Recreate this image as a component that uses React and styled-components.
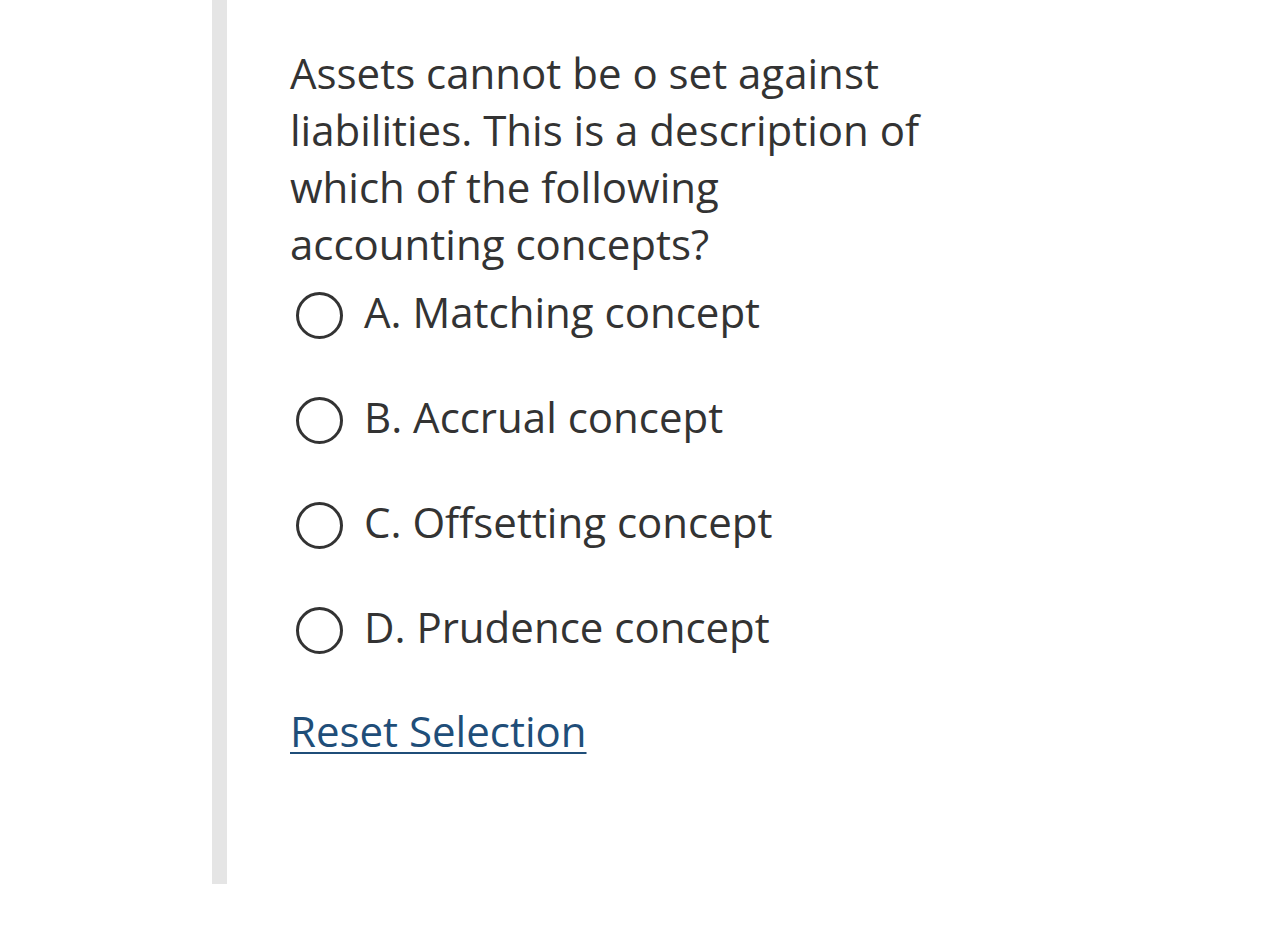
import React from "react";
import styled, { createGlobalStyle } from "styled-components";

const GlobalStyle = createGlobalStyle`
    body {
        margin: 0;
        background: #ffffff;
        font-family: "Open Sans", "Liberation Sans", sans-serif;
    }
`;

const options = [
    "A. Matching concept",
    "B. Accrual concept",
    "C. Offsetting concept",
    "D. Prudence concept",
];

const App = () => {
    return (
        <Page>
            <GlobalStyle />
            <Panel>
                <Question>
                    Assets cannot be o set against liabilities. This is a
                    description of which of the following accounting concepts?
                </Question>
                <OptionList>
                    {options.map((label) => (
                        <Option key={label}>
                            <Radio type="radio" name="answer" />
                            <OptionText>{label}</OptionText>
                        </Option>
                    ))}
                </OptionList>
                <ResetLink href="#">Reset Selection</ResetLink>
            </Panel>
        </Page>
    );
};

export default App;

const Page = styled.div`
    padding-left: 212px;
`;

const Panel = styled.section`
    box-sizing: border-box;
    height: 884px;
    border-left: 15px solid #e5e5e5;
    padding: 44px 0 0 63px;
    color: #333333;
`;

const Question = styled.p`
    margin: 0;
    width: 640px;
    font-size: 42px;
    line-height: 57px;
`;

const OptionList = styled.div`
    display: flex;
    flex-direction: column;
    gap: 48px;
    margin-top: 11px;
`;

const Option = styled.label`
    display: flex;
    align-items: center;
    gap: 21px;
    padding-left: 6px;
    cursor: pointer;
`;

const Radio = styled.input`
    appearance: none;
    box-sizing: border-box;
    width: 47px;
    height: 47px;
    margin: 0;
    margin-top: 7px;
    border: 3px solid #333333;
    border-radius: 50%;
    flex-shrink: 0;
`;

const OptionText = styled.span`
    font-size: 42px;
    line-height: 57px;
`;

const ResetLink = styled.a`
    display: inline-block;
    margin-top: 47px;
    font-size: 42px;
    line-height: 57px;
    color: #1f4e79;
    text-decoration: underline;
    text-decoration-thickness: 2px;
    text-underline-offset: 5px;
`;
